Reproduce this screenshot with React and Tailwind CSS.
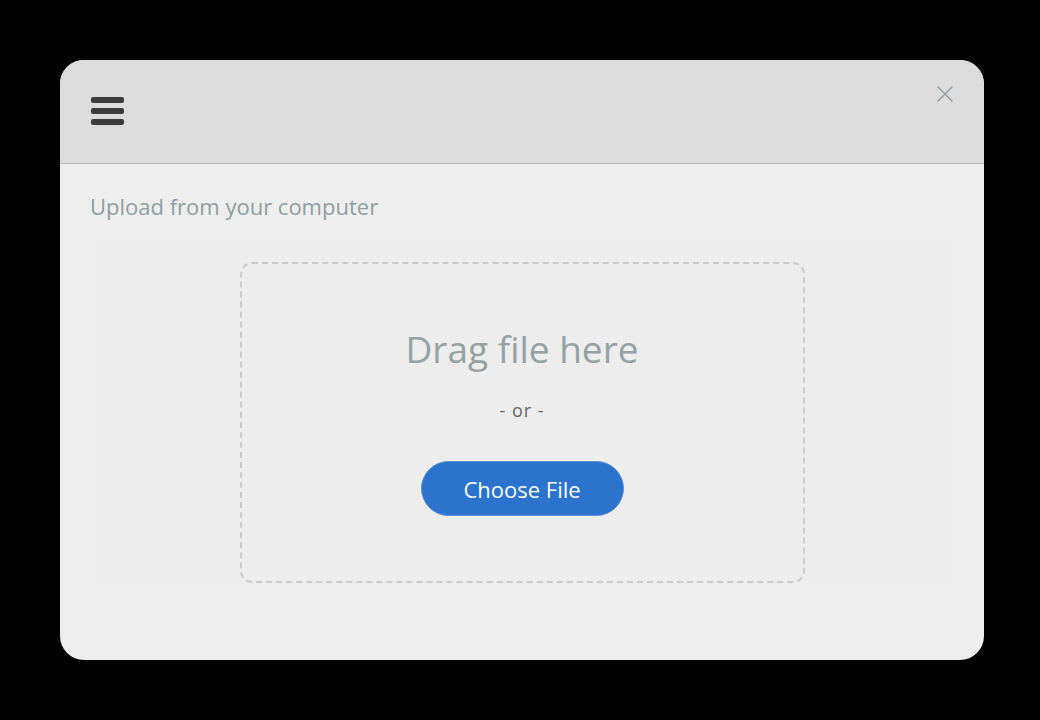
export default function App() {
  const font = { fontFamily: '"Open Sans", "Noto Sans", sans-serif' };
  return (
    <div className="w-[1040px] h-[720px] bg-black pl-[60px] pr-[56px] pt-[60px] pb-[60px]" style={font}>
      <div className="w-full h-full rounded-[24px] bg-[#eeeeee] overflow-hidden flex flex-col">
        <div className="h-[104px] shrink-0 bg-[#dcdcdc] border-b border-[#bcbcbc] flex justify-between pl-[31px] pr-[30px]">
          <div className="pt-[37px] flex flex-col gap-[5px]">
            <div className="w-[33px] h-[6px] rounded-[2px] bg-[#3b3b3b]"></div>
            <div className="w-[33px] h-[6px] rounded-[2px] bg-[#3b3b3b]"></div>
            <div className="w-[33px] h-[6px] rounded-[2px] bg-[#3b3b3b]"></div>
          </div>
          <div className="pt-[25px]">
            <svg width="18" height="18" viewBox="0 0 18 18" fill="none" stroke="#8e9c9c" strokeWidth="1.4" strokeLinecap="round">
              <path d="M2 2 L16 16 M16 2 L2 16" />
            </svg>
          </div>
        </div>
        <div className="px-[30px] pt-[27px] flex flex-col">
          <div className="text-[22px] leading-[30px] text-[#8c9ea4]">Upload from your computer</div>
          <div className="mt-[19px] bg-[#ededed] h-[345px] pt-[22px] flex justify-center">
            <div className="w-[565px] h-[321px] rounded-[12px] border-2 border-dashed border-[#cccccc] flex flex-col items-center pt-[60px]">
              <div className="text-[37px] leading-[50px] text-[#93a3a5]">Drag file here</div>
              <div className="mt-[23px] text-[18px] leading-[26px] text-[#666666] tracking-[1px]">- or -</div>
              <button className="mt-[38px] w-[203px] h-[55px] rounded-full bg-[#2b73cd] border border-[#5b8fd6] text-white text-[22px] leading-[28px]">
                Choose File
              </button>
            </div>
          </div>
        </div>
      </div>
    </div>
  );
}
